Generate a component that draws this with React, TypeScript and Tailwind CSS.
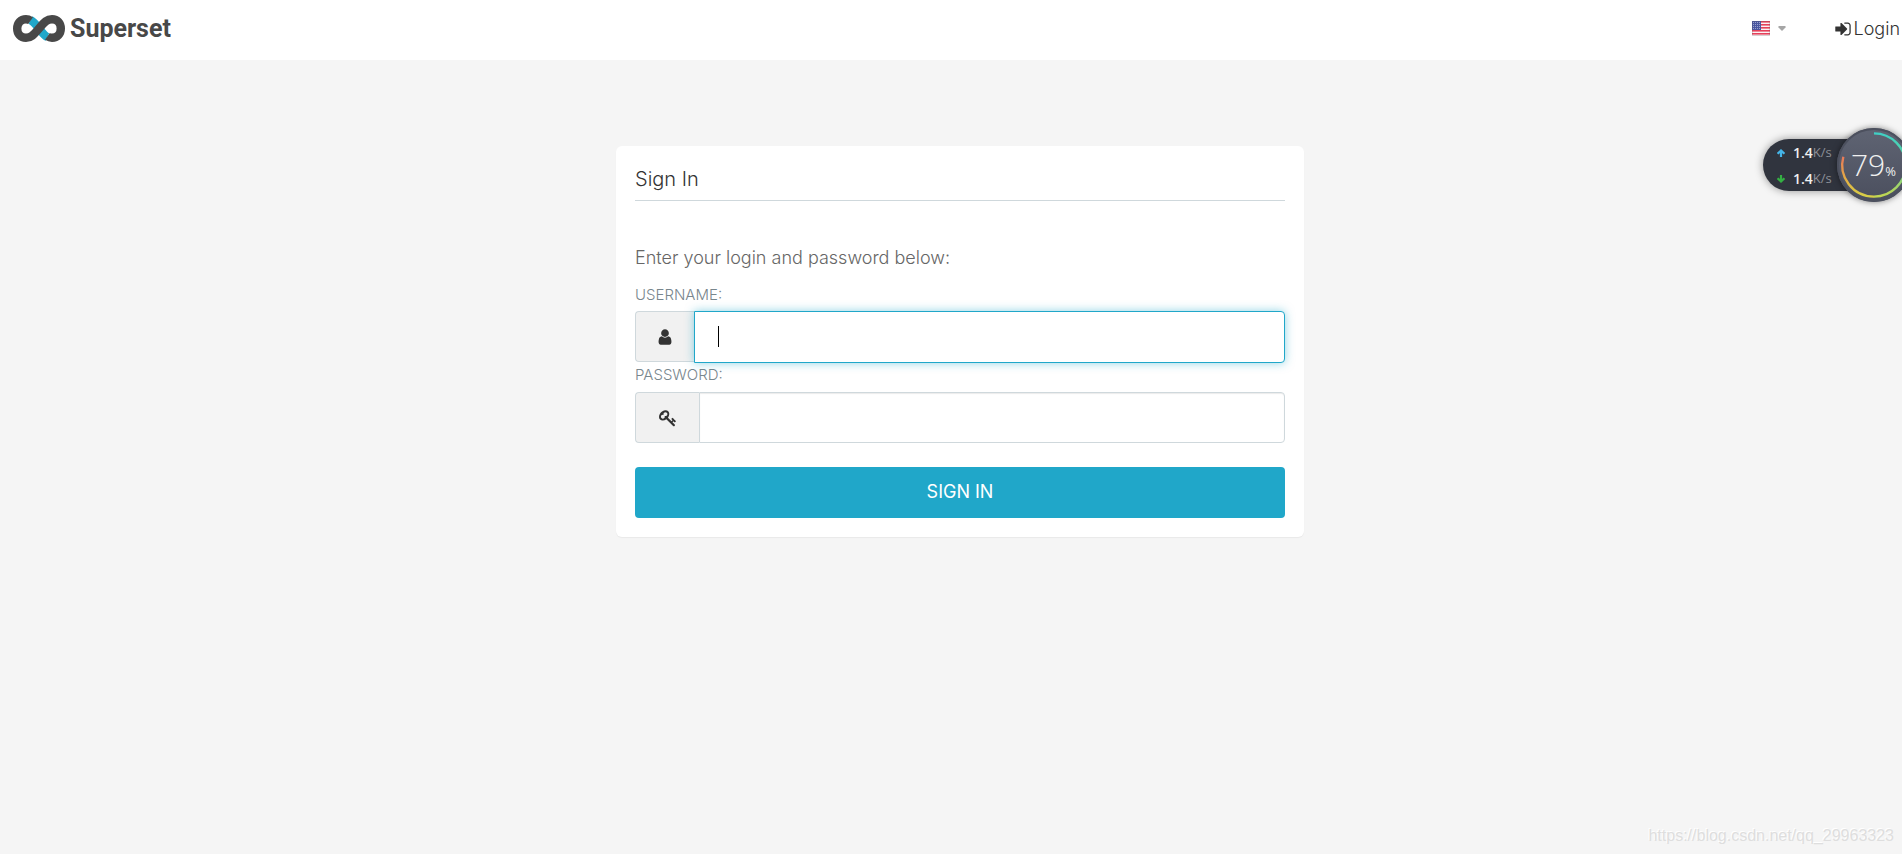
import type { ReactNode } from 'react';

const Icon = ({ d, className }: { d: string; className: string }) => (
  <svg viewBox="0 0 1792 1792" fill="currentColor" className={className} aria-hidden="true">
    <path d={d} />
  </svg>
);

const signInPath =
  'M1312 896q0 26-19 45l-544 544q-19 19-45 19t-45-19-19-45v-288h-448q-26 0-45-19t-19-45v-384q0-26 19-45t45-19h448v-288q0-26 19-45t45-19 45 19l544 544q19 19 19 45zm352-352v704q0 119-84.500 203.500t-203.500 84.500h-320q-13 0-22.500-9.500t-9.500-22.500q0-4-1-20t-.5-26.500 3-23.500 10-19.500 20.500-6.500h320q66 0 113-47t47-113v-704q0-66-47-113t-113-47h-312l-11.500-1-11.500-3-8-5.500-7-9-2-13.500q0-4-1-20t-.5-26.500 3-23.500 10-19.500 20.500-6.500h320q119 0 203.500 84.500t84.500 203.500z';
const userPath =
  'M1536 1399q0 109-62.500 187t-150.500 78h-854q-88 0-150.500-78t-62.500-187q0-85 8.500-160.500t31.500-152 58.500-131 94-89 134.500-34.500q131 128 313 128t313-128q76 0 134.500 34.500t94 89 58.500 131 31.500 152 8.500 160.500zm-256-887q0 159-112.500 271.500t-271.500 112.500-271.500-112.500-112.500-271.500 112.500-271.500 271.500-112.500 271.500 112.500 112.500 271.500z';
const keyPath =
  'M832 512q0-80-56-136t-136-56-136 56-56 136q0 42 19 83-41-19-83-19-80 0-136 56t-56 136 56 136 136 56 136-56 56-136q0-42-19-83 41 19 83 19 80 0 136-56t56-136zm851 704q0 17-49 66t-66 49q-9 0-28.500-16t-36.500-33-38.500-40-24.500-26l-96 96 220 220q28 28 28 68 0 42-39 81t-81 39q-40 0-68-28l-671-671q-176 131-365 131-163 0-265.500-102.500t-102.500-265.500q0-160 95-313t248-248 313-95q163 0 265.500 102.500t102.500 265.500q0 189-131 365l355 355 96-96q-3-3-26-24.500t-40-38.500-33-36.500-16-28.500q0-17 49-66t66-49q13 0 23 10 6 6 46 44.500t82 79.500 86.500 86 73 78 28.500 41z';

const Logo = () => (
  <a href="#" className="flex items-center gap-[5px]">
    <svg viewBox="0 0 52 27" className="h-[27px] w-[52px]" fill="none" strokeWidth="8.400" aria-hidden="true">
      <path d="M17.500 5C21 6.800 23 10 26 13.500S31 20.500 34.500 22" stroke="#20a7c9" />
      <path
        d="M17.600 5.600C16.300 4.700 14.800 4.200 13 4.200C7.600 4.200 4.200 8.200 4.200 13.500S7.600 22.800 13 22.800C18 22.800 20.500 20 26 13.500S34 4.200 39 4.200C44.400 4.200 47.800 8.200 47.800 13.500S44.400 22.800 39 22.800C37.200 22.800 35.700 22.300 34.400 21.400"
        stroke="#484848"
      />
    </svg>
    <span className="font-[Roboto,sans-serif] text-[25px] leading-[27px] font-bold text-[#484848]">Superset</span>
  </a>
);

const stripes = [0, 3, 6, 9, 12];

const Flag = () => (
  <svg viewBox="0 0 18 15" className="h-[15px] w-[18px]" aria-hidden="true">
    <rect width="18" height="15" fill="#fbf1f3" />
    {stripes.map((y) => (
      <rect key={y} y={y} width="18" height="1.600" fill="#e5405a" />
    ))}
    <rect width="9" height="9" fill="#4a57a0" />
    {[1.5, 3.5, 5.5, 7.5].map((x) =>
      [1.5, 3.5, 5.5, 7.5].map((y) => <circle key={`${x}-${y}`} cx={x} cy={y} r="0.500" fill="#b3badc" />)
    )}
    <rect x="0.500" y="0.500" width="17" height="14" fill="none" stroke="#555" strokeOpacity="0.200" />
  </svg>
);

const Navbar = () => (
  <nav className="flex h-[60px] items-center justify-between bg-white pr-[2px] pb-[3px] pl-[13px]">
    <Logo />
    <div className="flex items-center gap-12">
      <button type="button" aria-label="Language" className="flex items-center gap-2">
        <Flag />
        <svg viewBox="0 0 8 5" className="h-[5px] w-2" fill="#a6a6a6" aria-hidden="true">
          <path d="M0.500 0h7v1.500L4 5L0.500 1.500z" />
        </svg>
      </button>
      <a href="#" className="flex items-center gap-[2px] text-lg leading-6 font-light text-[#333]">
        <Icon d={signInPath} className="h-[18px] w-[18px]" />
        Login
      </a>
    </div>
  </nav>
);

const Addon = ({ children, className }: { children: ReactNode; className: string }) => (
  <span
    className={`flex h-[51px] items-center justify-center rounded-l border border-r-0 border-[#cfd8dc] bg-[#f1f1f1] text-[#333] ${className}`}
  >
    {children}
  </span>
);

const LoginForm = () => (
  <form className="mt-[43px] flex flex-col" onSubmit={(e) => e.preventDefault()}>
    <p className="mb-[11px] text-lg leading-7 font-light text-[#666]">Enter your login and password below:</p>

    <label htmlFor="username" className="mb-1 text-[15px] leading-6 font-light text-[#78868d]">
      USERNAME:
    </label>
    <div className="relative flex items-start">
      <Addon className="w-[59px]">
        <Icon d={userPath} className="h-[18px] w-[18px]" />
      </Addon>
      <input
        id="username"
        type="text"
        className="h-[52px] min-w-0 flex-1 rounded-r border border-[#20a7c9] bg-white px-6 text-lg text-[#333] caret-transparent shadow-[0_0_10px_rgba(32,167,201,0.5)] outline-none"
      />
      <span className="absolute top-[15px] left-[83px] h-[21px] w-px bg-black" />
    </div>

    <label htmlFor="password" className="mb-[5px] text-[15px] leading-6 font-light text-[#78868d]">
      PASSWORD:
    </label>
    <div className="flex">
      <Addon className="w-16">
        <Icon d={keyPath} className="h-[18px] w-[18px]" />
      </Addon>
      <input
        id="password"
        type="password"
        className="h-[51px] min-w-0 flex-1 rounded-r border border-[#cfd8dc] bg-white px-6 text-lg text-[#333] shadow-[inset_0_1px_1px_rgba(0,0,0,0.08)] outline-none"
      />
    </div>

    <button type="submit" className="mt-6 h-[51px] rounded bg-[#20a7c9] pb-px text-lg text-white">
      SIGN IN
    </button>
  </form>
);

const SpeedRow = ({ up }: { up?: boolean }) => (
  <div className="flex h-[26px] items-center">
    <svg viewBox="0 0 8 8" className="mr-2 h-2 w-2" fill="none" strokeWidth="2.200" aria-hidden="true">
      {up ? (
        <path d="M4 8V1.500M0.600 4.800L4 1.500l3.400 3.300" stroke="#45b5e8" />
      ) : (
        <path d="M4 0v6.500M0.600 3.200L4 6.500l3.400-3.300" stroke="#34b143" />
      )}
    </svg>
    <span className="font-['Open_Sans',sans-serif] text-sm font-semibold text-[#f0f0f0]">1.4</span>
    <span className="font-['Open_Sans',sans-serif] text-[13px] text-[#8d9097]">K/s</span>
  </div>
);

// Floating network / memory monitor, hangs over the right edge of the window
const SpeedWidget = () => (
  <div className="absolute top-[118px] right-0 h-[94px] w-[149px] overflow-hidden">
    <div className="absolute top-[21px] left-[10px] h-[52px] w-[110px] rounded-l-full bg-[#30343e] pt-px pl-[14px] shadow-[0_0_8px_rgba(0,0,0,0.4)]">
      <SpeedRow up />
      <SpeedRow />
    </div>
    <div className="absolute top-[10px] left-[84px] flex h-[74px] w-[74px] items-center justify-center rounded-full bg-[#535766] pr-px shadow-[0_0_6px_rgba(0,0,0,0.5)]">
      <svg viewBox="0 0 76 76" className="absolute inset-0 h-full w-full" fill="none" aria-hidden="true">
        <defs>
          <linearGradient id="face" x1="0" y1="0" x2="0" y2="1">
            <stop offset="0" stopColor="#5f6473" />
            <stop offset="1" stopColor="#4b4f5e" />
          </linearGradient>
          <linearGradient id="arcRight" x1="0" y1="0" x2="0" y2="1">
            <stop offset="0" stopColor="#3fd0c4" />
            <stop offset="0.500" stopColor="#5fd39a" />
            <stop offset="1" stopColor="#c3d650" />
          </linearGradient>
          <linearGradient id="arcLeft" x1="0" y1="0" x2="0" y2="1">
            <stop offset="0" stopColor="#e8785a" />
            <stop offset="0.600" stopColor="#e3b143" />
            <stop offset="1" stopColor="#d6cf48" />
          </linearGradient>
        </defs>
        <circle cx="38" cy="38" r="37" fill="url(#face)" stroke="#4c505e" strokeWidth="2" />
        <path d="M38 5.500a32.500 32.500 0 0 1 0 65" stroke="url(#arcRight)" strokeWidth="2.400" />
        <path d="M38 70.500A32.500 32.500 0 0 1 6.500 29.500" stroke="url(#arcLeft)" strokeWidth="2.400" />
      </svg>
      <p className="relative flex items-baseline font-['Open_Sans',sans-serif] text-[#f0f0f0]">
        <span className="text-3xl font-light">79</span>
        <span className="text-[13px]">%</span>
      </p>
    </div>
  </div>
);

export default function App() {
  return (
    <div className="relative flex min-h-screen flex-col overflow-x-hidden bg-[#f5f5f5] font-[Inter,sans-serif]">
      <Navbar />
      <main className="flex flex-1 justify-center pt-[86px] pl-[18px]">
        <section className="w-full max-w-[688px] self-start rounded-md bg-white p-[19px] shadow-[0_1px_1px_rgba(0,0,0,0.05)]">
          <h1 className="border-b border-[#cfd8dc] pt-px pb-[7px] text-xl leading-[27px] font-light text-[#333]">
            Sign In
          </h1>
          <LoginForm />
        </section>
      </main>
      <footer className="flex justify-end pr-2 pb-1 font-['Liberation_Sans',sans-serif] text-base leading-7 text-[#dedede] [text-shadow:-1px_-1px_0_#fff]">
        https://blog.csdn.net/qq_29963323
      </footer>
      <SpeedWidget />
    </div>
  );
}
